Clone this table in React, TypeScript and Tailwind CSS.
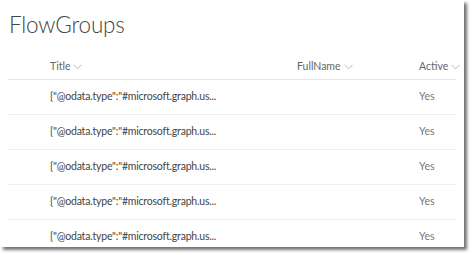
import React from "react";

const Chevron = () => (
  <svg width="9" height="6" viewBox="0 0 9 6" className="ml-[3px] mt-[1px] shrink-0">
    <path d="M0.5 0.8 L4.5 4.8 L8.5 0.8" fill="none" stroke="#b0b0b0" strokeWidth="0.9" />
  </svg>
);

const rows = [0, 1, 2, 3, 4];

export default function App() {
  return (
    <div className="w-[474px] h-[255px] bg-white overflow-hidden" style={{ fontFamily: 'Lato, "Open Sans", sans-serif' }}>
      <div className="w-[464px] h-[247px] bg-white shadow-[3px_3px_3px_rgba(0,0,0,0.55)] overflow-hidden">
        <div className="pl-[9px] pt-[12px] h-[51px] text-[22.5px] leading-[26px] font-light text-[#444] tracking-[-0.2px]">
          FlowGroups
        </div>
        <div className="mx-[8px] h-[29px] pt-[3px] border-b border-[#e6e6e6] flex items-center text-[10.5px] text-[#666]">
          <div className="w-[247px] shrink-0 pl-[42px] flex items-center">Title<Chevron /></div>
          <div className="w-[164px] shrink-0 pl-[42px] flex items-center">FullName<Chevron /></div>
          <div className="shrink-0 flex items-center">Active<Chevron /></div>
        </div>
        {rows.map((r) => (
          <div key={r} className="mx-[8px] h-[35px] border-b border-[#f0f0f0] flex items-center text-[10.5px] text-[#444]">
            <div className="w-[247px] shrink-0 pl-[42px] whitespace-nowrap tracking-[-0.2px]">{'{"@odata.type":"#microsoft.graph.us...'}</div>
            <div className="w-[164px] shrink-0"></div>
            <div className="shrink-0 text-[#777]">Yes</div>
          </div>
        ))}
      </div>
    </div>
  );
}
